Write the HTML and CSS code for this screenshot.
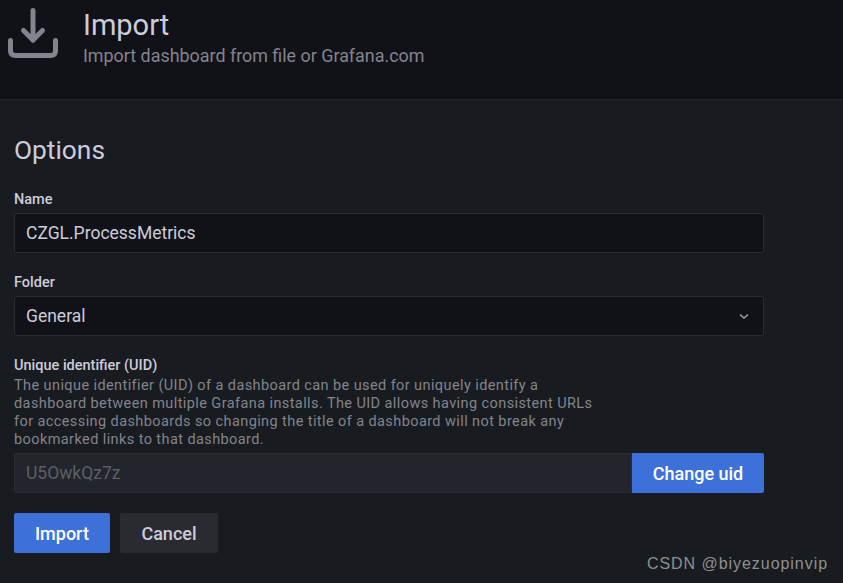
FILE: index.html
```html
<!DOCTYPE html>
<html lang="en">
<head>
    <meta charset="UTF-8">
    <meta name="viewport" content="width=device-width, initial-scale=1.0">
    <title>Import</title>
    <link rel="stylesheet" href="styles.css">
</head>
<body>
    <header class="page-header">
        <svg class="header-icon" width="50" height="50" viewBox="0 0 50 50" fill="none" stroke="#83848e" stroke-width="5" stroke-linecap="round" stroke-linejoin="round">
            <path d="M25 2.500V32"/>
            <path d="M15.500 22.500L25 32L34.500 22.500"/>
            <path d="M2.500 32.500V42.500Q2.500 47.500 7.500 47.500H42.500Q47.500 47.500 47.500 42.500V32.500"/>
        </svg>
        <div class="header-text">
            <h1>Import</h1>
            <p>Import dashboard from file or Grafana.com</p>
        </div>
    </header>

    <main class="content">
        <h2>Options</h2>

        <div class="field">
            <label class="field-label">Name</label>
            <div class="input">CZGL.ProcessMetrics</div>
        </div>

        <div class="field">
            <label class="field-label">Folder</label>
            <div class="input select">
                <span>General</span>
                <svg width="16" height="16" viewBox="0 0 16 16" fill="none" stroke="#a0a1a8" stroke-width="1.500">
                    <path d="M4 6.500L8 10L12 6.500"/>
                </svg>
            </div>
        </div>

        <div class="field">
            <label class="field-label">Unique identifier (UID)</label>
            <p class="field-desc">The unique identifier (UID) of a dashboard can be used for uniquely identify a dashboard between multiple Grafana installs. The UID allows having consistent URLs for accessing dashboards so changing the title of a dashboard will not break any bookmarked links to that dashboard.</p>
            <div class="input-group">
                <div class="input disabled">U5OwkQz7z</div>
                <button class="btn btn-primary addon">Change uid</button>
            </div>
        </div>

        <div class="actions">
            <button class="btn btn-primary">Import</button>
            <button class="btn btn-secondary">Cancel</button>
        </div>
    </main>

    <div class="watermark">CSDN @biyezuopinvip</div>
</body>
</html>
```

FILE: styles.css
```css
html, body {
    height: 100%;
}
body {
    margin: 0;
    background-color: #181b1f;
    font-family: Roboto, sans-serif;
    color: #ccccdc;
    overflow: hidden;
}
.page-header {
    display: flex;
    gap: 25px;
    height: 100px;
    padding: 8px 8px 0;
    box-sizing: border-box;
    background-color: #111217;
    border-bottom: 1px solid #22252b;
}
.header-icon {
    flex: none;
}
.header-text h1 {
    margin: 0;
    font-size: 29px;
    font-weight: 400;
    line-height: 34px;
}
.header-text p {
    margin: 2px 0 0;
    font-size: 17.900px;
    line-height: 24px;
    color: #83848e;
}
.content {
    padding: 34px 14px 0;
    width: 750px;
}
h2 {
    margin: 0 0 24px;
    font-size: 26.300px;
    font-weight: 400;
    line-height: 32px;
}
.field {
    margin-bottom: 20px;
}
.field-label {
    display: block;
    margin-bottom: 3px;
    font-size: 14.500px;
    font-weight: 500;
    line-height: 20px;
}
.field-desc {
    margin: -2px 0 4px;
    width: 590px;
    font-size: 14.500px;
    letter-spacing: 0.410px;
    line-height: 18px;
    color: #83848e;
}
.input {
    display: flex;
    align-items: center;
    height: 40px;
    padding: 0 11px;
    box-sizing: border-box;
    background-color: #111217;
    border: 1px solid #2a2c31;
    border-radius: 2px;
    font-size: 17.500px;
}
.select {
    justify-content: space-between;
}
.disabled {
    flex: 1;
    background-color: #22252b;
    color: #5d5f66;
    border-radius: 2px 0 0 2px;
}
.input-group {
    display: flex;
}
.actions {
    display: flex;
    gap: 10px;
}
.btn {
    height: 40px;
    padding: 0 21px;
    border: none;
    border-radius: 2px;
    font-family: inherit;
    font-size: 18px;
    font-weight: 500;
}
.btn-primary {
    background-color: #3d71d9;
    color: #fff;
}
.btn-secondary {
    padding: 0 21.500px;
    background-color: #2a2b30;
    color: #ccccdc;
}
.addon {
    width: 132px;
    padding: 0;
    border-radius: 0 2px 2px 0;
}
.watermark {
    position: absolute;
    right: 15px;
    bottom: 10px;
    font-family: "Liberation Sans", sans-serif;
    font-size: 16px;
    letter-spacing: 0.950px;
    color: #8f9092;
}
```
